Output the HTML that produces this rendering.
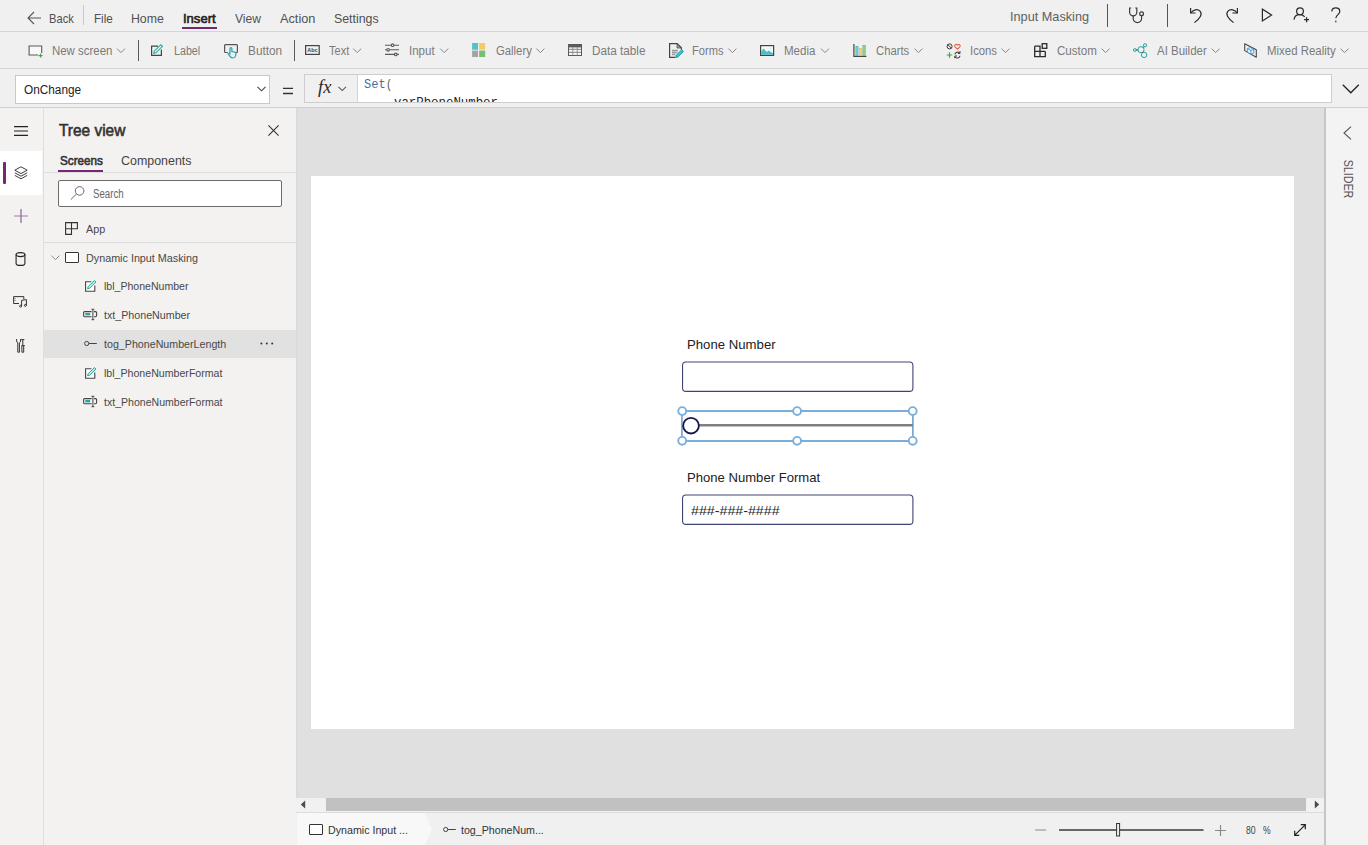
<!DOCTYPE html>
<html lang="en">
<head>
<meta charset="utf-8">
<title>Input Masking - Power Apps</title>
<style>
*{box-sizing:border-box;margin:0;padding:0}
html,body{width:1368px;height:845px;overflow:hidden;background:#f0f0f0;font-family:"Liberation Sans",sans-serif;color:#333}
.a{position:absolute}
.t{position:absolute;white-space:nowrap}
svg{position:absolute;overflow:visible}
#menubar{left:0;top:0;width:1368px;height:32px;background:#f0f0f0;border-bottom:1px solid #d4d4d4}
#ribbon{left:0;top:32px;width:1368px;height:37px;background:#f0f0f0;border-bottom:1px solid #d4d4d4}
#fxbar{left:0;top:69px;width:1368px;height:39px;background:#f0f0f0;border-bottom:1px solid #cfcfcf}
#rail{left:0;top:108px;width:44px;height:737px;background:#f3f2f1;border-right:1px solid #e0dfde}
#tree{left:44px;top:108px;width:252px;height:737px;background:#f3f2f1}
#canvasarea{left:296px;top:108px;width:1030px;height:737px;background:linear-gradient(90deg,#d9d9d9 0,#e0e0e0 3px,#e0e0e0 100%);border-right:2px solid #c6c6c6}
#screen{left:311px;top:176px;width:983px;height:553px;background:#fff}
#hscroll{left:296px;top:798px;width:1028px;height:14px;background:#f1f1f1}
#bottombar{left:296px;top:812px;width:1028px;height:33px;background:#f0f0f0;border-top:1px solid #dcdcdc}
#rightpanel{left:1326px;top:108px;width:42px;height:737px;background:#f3f3f3}
.vsep{position:absolute;width:1px;background:#555}
.inp{position:absolute;background:#fff;border:1px solid #3a3a6a;border-radius:4px}
.hd{position:absolute;width:9.800px;height:9.800px;border:1.800px solid #7aafdc;border-radius:50%;background:#fff}
</style>
</head>
<body>
<div id="menubar" class="a"></div>
<div id="ribbon" class="a"></div>
<div id="fxbar" class="a"></div>
<div id="rail" class="a"></div>
<div id="tree" class="a"></div>
<div id="canvasarea" class="a"></div>
<div id="screen" class="a"></div>
<div id="hscroll" class="a"></div>
<div id="bottombar" class="a"></div>
<div id="rightpanel" class="a"></div>

<!-- ===== menu bar ===== -->
<svg style="left:27px;top:11px" width="15" height="14" viewBox="0 0 15 14" fill="none" stroke="#555" stroke-width="1.1"><path d="M14 7H1M7 1L1 7l6 6"/></svg>
<div class="vsep" style="left:83px;top:5px;height:20px;background:#c8c8c8"></div>
<div class="a" style="left:182px;top:27px;width:35px;height:2px;background:#742774"></div>
<div class="vsep" style="left:1107px;top:4px;height:23px"></div>
<div class="vsep" style="left:1167px;top:4px;height:23px"></div>
<!-- stethoscope -->
<svg style="left:1128px;top:7px" width="18" height="17" viewBox="0 0 18 17" fill="none" stroke="#3a3a3a" stroke-width="1.2"><path d="M3.2 1H1.6v4.2a3.6 3.6 0 0 0 7.2 0V1H7.2"/><path d="M5.2 8.8v2.6a4.2 4.2 0 0 0 8.4 0V8.6"/><circle cx="13.6" cy="6.7" r="1.9"/></svg>
<!-- undo -->
<svg style="left:1189px;top:7px" width="15" height="16" viewBox="0 0 15 16" fill="none" stroke="#2b2b2b" stroke-width="1.2"><path d="M1.6 1v5h5"/><path d="M1.8 6C4 2.6 8.6 1.6 11 4.2c2.6 2.8.6 6.6-5.6 11.4"/></svg>
<!-- redo -->
<svg style="left:1224px;top:7px" width="15" height="16" viewBox="0 0 15 16" fill="none" stroke="#2b2b2b" stroke-width="1.2"><path d="M13.4 1v5h-5"/><path d="M13.2 6C11 2.6 6.4 1.6 4 4.2c-2.6 2.8-.6 6.6 5.6 11.4"/></svg>
<!-- play -->
<svg style="left:1261px;top:8px" width="12" height="14" viewBox="0 0 12 14" fill="none" stroke="#2b2b2b" stroke-width="1.2" stroke-linejoin="miter"><path d="M1.4 1.2v11.8L10.6 7z"/></svg>
<!-- user plus -->
<svg style="left:1293px;top:7px" width="17" height="16" viewBox="0 0 17 16" fill="none" stroke="#2b2b2b" stroke-width="1.2"><circle cx="7" cy="4.2" r="3.4"/><path d="M1 12.6c.4-3 2.8-4.9 6-4.9 2 0 3.6.8 4.7 2.1"/><path d="M13.6 10.2v5M11.1 12.7h5" stroke-width="1.3"/></svg>
<!-- help -->
<svg style="left:1331px;top:7px" width="10" height="16" viewBox="0 0 10 16" fill="none" stroke="#2b2b2b" stroke-width="1.2"><path d="M.8 4.6C.8 2.4 2.6.9 4.8.9s4 1.500 4 3.6c0 3-4 3.300-4 6.800"/><path d="M4.8 13.8v1.500" stroke-width="1.3"/></svg>

<!-- ===== ribbon ===== -->
<div class="vsep" style="left:138px;top:40px;height:21px;background:#5a5a5a"></div>
<div class="vsep" style="left:294px;top:40px;height:21px;background:#5a5a5a"></div>
<!-- new screen -->
<svg style="left:27.500px;top:45px" width="16" height="14" viewBox="0 0 16 14" fill="none"><path d="M10.200 10H1.100V1h12.600v7" stroke="#5a5a5a" stroke-width="1.100" fill="#f9f9f9"/><path d="M12.600 8.600v4M10.600 10.600h4" stroke="#3aa655" stroke-width="1.100"/></svg>
<!-- label -->
<svg style="left:151px;top:44px" width="13" height="12" viewBox="0 0 13 12" fill="none"><path d="M7 2.200H.6v9.200h9.800V5.600" stroke="#444" stroke-width="1.200"/><path d="M2.700 9.300l.5-2.100L9.800.7l1.600 1.600-6.500 6.500z" stroke="#1fa89c" stroke-width="1.100" fill="#e9f7f6"/></svg>
<!-- button -->
<svg style="left:224px;top:44px" width="15" height="15" viewBox="0 0 15 15" fill="none"><path d="M3.800 8.500H1.400a.8.800 0 0 1-.8-.8V1.400a.8.800 0 0 1 .8-.8h11.200a.8.800 0 0 1 .8.800v6.300a.8.800 0 0 1-.8.800h-.8" stroke="#555" stroke-width="1.200"/><path d="M6 9.600V4.500a.95.95 0 0 1 1.900 0v3l2.900.7c.8.200 1.200.8 1.100 1.600l-.4 2.200a2.500 2.500 0 0 1-2.500 2c-1.300 0-2.100-.5-2.700-1.400L4.200 9.900c.6-.8 1.300-.7 1.800-.3z" stroke="#23a3ad" stroke-width="1.200" fill="#f0f0f0"/></svg>
<!-- text -->
<svg style="left:305px;top:45px" width="16" height="11" viewBox="0 0 16 11" fill="none"><rect x=".6" y=".6" width="13.600" height="8.800" stroke="#444" stroke-width="1.200"/><text x="2.300" y="7.400" font-family="Liberation Sans,sans-serif" font-size="6.200" font-weight="700" fill="#444" stroke="none" textLength="10.200" lengthAdjust="spacingAndGlyphs">Abc</text></svg>
<!-- input -->
<svg style="left:385px;top:43px" width="15" height="14" viewBox="0 0 15 14" fill="none" stroke="#5a5a5a" stroke-width="1.100"><path d="M0 2.200h6.300M8.900 2.200H14M0 6.800h1.800M4.400 6.800H14M0 11.400h9.400M12 11.400h2"/><circle cx="7.600" cy="2.200" r="1.300"/><circle cx="3.100" cy="6.800" r="1.300"/><circle cx="10.700" cy="11.400" r="1.300"/></svg>
<!-- gallery -->
<svg style="left:472px;top:43px" width="14" height="15" viewBox="0 0 14 15"><rect x=".1" y="0" width="5.900" height="6.700" fill="#4fc3c8"/><rect x="7.100" y="0" width="6.100" height="6.700" fill="#f8ca66"/><rect x=".1" y="7.600" width="5.900" height="6.400" fill="#a3a3a3"/><rect x="7.100" y="7.600" width="6.100" height="6.400" fill="#72c177"/></svg>
<!-- data table -->
<svg style="left:568px;top:44px" width="15" height="12" viewBox="0 0 15 12" fill="none" stroke="#5a5a5a" stroke-width="1"><rect x=".5" y=".5" width="13" height="11" fill="#f6f6f6"/><path d="M.5 2.200h13" stroke-width="2.400"/><path d="M1 5.300h12M1 8.300h12" stroke="#9a9a9a" stroke-width="1.300"/><path d="M4.800 3v8.400M9.300 3v8.400" stroke="#8a8a8a" stroke-width=".9"/></svg>
<!-- forms -->
<svg style="left:668.500px;top:43px" width="16" height="16" viewBox="0 0 16 16" fill="none"><path d="M6.400 14.400H.6V.6h7.600l4.200 4.200v2" stroke="#444" stroke-width="1.200"/><path d="M8 .8v4.200h4.200z" fill="#9a9a9a" stroke="#555" stroke-width=".8"/><path d="M3 7.500h6M3 9.500h5.200M3 11.500h3.200" stroke="#9a9a9a" stroke-width="1.300"/><path d="M6.800 14.500l.4-2.200 5.500-5.600 1.700 1.700-5.500 5.600z" stroke="#1c9aa5" stroke-width="1" fill="#45c3cb"/></svg>
<!-- media -->
<svg style="left:760px;top:45px" width="15" height="12" viewBox="0 0 15 12" fill="none"><rect x=".6" y=".6" width="13" height="9.800" stroke="#444" stroke-width="1.200" fill="#f7f7f7"/><path d="M1.200 9.800V6.200l2.400-2.600 3.200 3.400 1.800-1.500 4.400 2.800v1.500z" fill="#4bbfc3"/><circle cx="10.400" cy="3.200" r=".8" fill="#bfe6e8"/></svg>
<!-- charts -->
<svg style="left:852.500px;top:44px" width="14" height="14" viewBox="0 0 14 14" fill="none"><path d="M.9 0v12.400H13.400" stroke="#444" stroke-width="1.200"/><rect x="2.900" y="2.400" width="2.100" height="9" fill="#7fd3d6" stroke="#3db2b8" stroke-width=".7"/><rect x="6.400" y="4.400" width="2.100" height="7" fill="#f9d588" stroke="#e9b64d" stroke-width=".7"/><rect x="9.900" y="1.500" width="2.300" height="9.900" fill="#97d39b" stroke="#67b56d" stroke-width=".7"/></svg>
<!-- icons -->
<svg style="left:945.500px;top:43px" width="16" height="16" viewBox="0 0 16 16" fill="none"><circle cx="3.600" cy="3.400" r="2.500" stroke="#3a3a3a" stroke-width="1"/><path d="M1.800 1.600l3.600 3.600" stroke="#3a3a3a" stroke-width="1"/><path d="M11.400 6.200L9 3.800a1.450 1.450 0 0 1 2.050-2.050l.35.350.35-.350A1.450 1.450 0 0 1 13.800 3.800z" stroke="#e9603f" stroke-width="1.100"/><path d="M3.500 9.200v5.600M.7 12h5.600" stroke="#3aa655" stroke-width="1.200"/><path d="M8.800 11.400a2.700 2.700 0 0 1 4.800-1.300M14 12.700a2.700 2.700 0 0 1-4.800 1.300" stroke="#3a3a3a" stroke-width="1.100"/><path d="M14 8.200v2.200h-2.200M8.800 15.200V13H11" stroke="#3a3a3a" stroke-width="1"/></svg>
<!-- custom -->
<svg style="left:1034px;top:43px" width="14" height="15" viewBox="0 0 14 15" fill="none" stroke="#2a2a2a" stroke-width="1.300"><path d="M.7 3.200h5.300v10.400M.7 8.400h10.600M.7 3.200v10.400h10.600V8.400"/><rect x="8.200" y=".7" width="4.600" height="4.600"/></svg>
<!-- ai builder -->
<svg style="left:1133px;top:43px" width="15" height="15" viewBox="0 0 15 15" fill="none" stroke="#1fa5a5" stroke-width="1"><circle cx="1.900" cy="7" r="1.400"/><circle cx="8" cy="6.700" r="3.100"/><circle cx="12" cy="2.300" r="1.600"/><circle cx="11.100" cy="11.900" r="2.700"/><path d="M3.200 7h1.800M10.100 4.500l.8-1M9.500 9.400l.3.400" stroke="#444"/></svg>
<!-- mixed reality -->
<svg style="left:1243.500px;top:43px" width="14" height="15" viewBox="0 0 14 15" fill="none"><path d="M.7.800l11.600 6v7.400L.7 7.600z" stroke="#444" stroke-width="1.050" stroke-linejoin="round"/><path d="M3.400 5.600l3-1 3.400 1.800v3.800l-3 .8-3.400-1.800zM3.400 5.600l3.400 1.800 3-.8M6.800 7.400v3.600" stroke="#3f97dd" stroke-width=".9" stroke-linejoin="round" fill="#eef5fb"/></svg>
<!-- ribbon chevrons -->
<svg style="left:0;top:0" width="1368" height="70" viewBox="0 0 1368 70" fill="none" stroke="#858585" stroke-width="1"><path d="M117 48.600l4 4 4-4M353.200 48.600l4 4 4-4M440.200 48.600l4 4 4-4M536.400 48.600l4 4 4-4M728.400 48.600l4 4 4-4M821 48.600l4 4 4-4M914.500 48.600l4 4 4-4M1001.500 48.600l4 4 4-4M1101.600 48.600l4 4 4-4M1211.600 48.600l4 4 4-4M1340.500 48.600l4 4 4-4"/></svg>

<!-- ===== formula bar ===== -->
<div class="a" style="left:15px;top:75px;width:255px;height:29px;background:#fff;border:1px solid #c8c8c8"></div>
<svg style="left:257px;top:86px" width="9" height="6" viewBox="0 0 9 6" fill="none" stroke="#444" stroke-width="1.100"><path d="M.5.800l4 4 4-4"/></svg>
<svg style="left:283px;top:87px" width="10" height="8" viewBox="0 0 10 8" stroke="#333" stroke-width="1.300"><path d="M0 1.400h10M0 6.500h10"/></svg>
<div class="a" style="left:304px;top:74px;width:1028px;height:29px;background:#fff;border:1px solid #cecece"></div>
<div class="a" style="left:305px;top:75px;width:53px;height:27px;background:#f0f0f0;border-right:1px solid #d4d4d4"></div>
<svg style="left:338px;top:86px" width="9" height="6" viewBox="0 0 9 6" fill="none" stroke="#555" stroke-width="1.050"><path d="M.5.800l3.700 3.700L7.900.8"/></svg>
<svg style="left:1342px;top:84px" width="18" height="10" viewBox="0 0 18 10" fill="none" stroke="#222" stroke-width="1.300"><path d="M.8.800l8 8 8-8"/></svg>
<div class="a" id="fxclip" style="left:358px;top:75px;width:973px;height:27px;overflow:hidden"></div>

<!-- ===== left rail ===== -->
<svg style="left:14px;top:126px" width="14" height="10" viewBox="0 0 14 10" stroke="#222" stroke-width="1.100"><path d="M0 .6h14M0 5h14M0 9.400h14"/></svg>
<div class="a" style="left:0;top:151px;width:42px;height:44px;background:#fff"></div>
<div class="a" style="left:3px;top:162px;width:3px;height:22px;background:#742774;border-radius:1px"></div>
<svg style="left:14px;top:166px" width="14" height="14" viewBox="0 0 14 14" fill="none" stroke="#333" stroke-width=".95" stroke-linejoin="round"><path d="M7 .8l6.200 3.400L7 7.600.8 4.200z"/><path d="M.8 6.800L7 10.200l6.200-3.400"/><path d="M.8 9.400L7 12.800l6.200-3.400"/></svg>
<svg style="left:13.500px;top:209px" width="14" height="14" viewBox="0 0 14 14" stroke="#75407a" stroke-width="1"><path d="M7 0v14"/><path d="M0 7h14" stroke="#9a7a9c"/></svg>
<svg style="left:15px;top:252px" width="11" height="14" viewBox="0 0 11 14" fill="none" stroke="#222" stroke-width="1.100"><ellipse cx="5.500" cy="2.600" rx="4.400" ry="2"/><path d="M1.100 2.600v8.800c0 1.100 2 2 4.400 2s4.400-.9 4.400-2V2.600"/></svg>
<svg style="left:13px;top:296px" width="16" height="12" viewBox="0 0 16 12" fill="none" stroke="#333" stroke-width="1"><path d="M6 7.500H.6V.6h10.200v2.600"/><path d="M2 2.200v.8M2 4.200v.8"/><path d="M8.600 10V4.400l4.800-.8v5.600"/><circle cx="7.600" cy="10.200" r="1"/><circle cx="12.400" cy="9.400" r="1"/></svg>
<svg style="left:16px;top:339px" width="9" height="14" viewBox="0 0 9 14" fill="none" stroke="#333" stroke-width="1"><path d="M.6 0v2c0 1 .5 1.500 1.200 1.800v9.400h1.600V3.800C4.100 3.500 4.600 3 4.600 2V0"/><path d="M5.200.6h3.200M6.800.6v5.600M5.400 6.600h3.400M5.900 7v6.200h1.800V7"/></svg>

<!-- ===== tree view ===== -->
<svg style="left:268px;top:125px" width="11" height="11" viewBox="0 0 11 11" stroke="#333" stroke-width="1.100"><path d="M.4.400l10.200 10.200M10.600.4L.4 10.600"/></svg>
<div class="a" style="left:44px;top:172px;width:252px;height:1px;background:#dcdcdc"></div>
<div class="a" style="left:58px;top:170px;width:45px;height:2px;background:#742774"></div>
<div class="a" style="left:58px;top:180px;width:224px;height:27px;background:#fff;border:1px solid #6b6b6b;border-radius:2px"></div>
<svg style="left:70px;top:186px" width="14" height="14" viewBox="0 0 14 14" fill="none" stroke="#7d5a7d" stroke-width="1"><circle cx="9.600" cy="4.900" r="4.300"/><path d="M6.500 8L.8 13.600"/></svg>
<svg style="left:65px;top:222px" width="14" height="13" viewBox="0 0 14 13" fill="none" stroke="#333" stroke-width="1.100"><path d="M.6.600h11.800v6.200H.6zM6.500.6v11.800H.6V6.800"/></svg>
<div class="a" style="left:44px;top:242px;width:252px;height:1px;background:#dcdcdc"></div>
<svg style="left:51px;top:255px" width="9" height="6" viewBox="0 0 9 6" fill="none" stroke="#8a8a8a" stroke-width="1"><path d="M.4.600l4 4 4-4"/></svg>
<div class="a" style="left:65px;top:252px;width:14px;height:11px;border:1.200px solid #333;border-radius:1px;background:#fff"></div>
<div class="a" style="left:44px;top:330px;width:252px;height:28px;background:#e1e1e1"></div>
<!-- label icons -->
<svg style="left:84.500px;top:280px" width="12" height="12" viewBox="0 0 12 12" fill="none"><path d="M6.300 1.800H.6v9.500h9.200V5.400" stroke="#444" stroke-width="1.100" fill="#fff"/><path d="M2.600 8.800l.5-2L9.400.5 10.900 2 4.600 8.300z" stroke="#1fa89c" stroke-width="1" fill="#c5efe9"/></svg>
<svg style="left:84.500px;top:367px" width="12" height="12" viewBox="0 0 12 12" fill="none"><path d="M6.300 1.800H.6v9.500h9.200V5.400" stroke="#444" stroke-width="1.100" fill="#fff"/><path d="M2.600 8.800l.5-2L9.400.5 10.900 2 4.600 8.300z" stroke="#1fa89c" stroke-width="1" fill="#c5efe9"/></svg>
<!-- text input icons -->
<svg style="left:83px;top:309px" width="15" height="11" viewBox="0 0 15 11" fill="none"><path d="M8.600 2.600H1.700A1.100 1.100 0 0 0 .6 3.700v2.900a1.100 1.100 0 0 0 1.100 1.100h6.900M11 2.600h1.500a1.100 1.100 0 0 1 1.100 1.100v2.900a1.100 1.100 0 0 1-1.100 1.100H11" stroke="#444" stroke-width="1.100" fill="none"/><rect x="2.300" y="4" width="4.800" height="2.300" fill="#1fa89c"/><path d="M9.900.3v10.400M8.500.3h2.800M8.500 10.700h2.800" stroke="#444" stroke-width="1"/></svg>
<svg style="left:83px;top:396px" width="15" height="11" viewBox="0 0 15 11" fill="none"><path d="M8.600 2.600H1.700A1.100 1.100 0 0 0 .6 3.700v2.900a1.100 1.100 0 0 0 1.100 1.100h6.900M11 2.600h1.500a1.100 1.100 0 0 1 1.100 1.100v2.900a1.100 1.100 0 0 1-1.100 1.100H11" stroke="#444" stroke-width="1.100" fill="none"/><rect x="2.300" y="4" width="4.800" height="2.300" fill="#1fa89c"/><path d="M9.900.3v10.400M8.500.3h2.800M8.500 10.700h2.800" stroke="#444" stroke-width="1"/></svg>
<!-- slider icon -->
<svg style="left:84px;top:340px" width="13" height="7" viewBox="0 0 13 7" fill="none" stroke="#444" stroke-width="1"><circle cx="2.700" cy="3.500" r="2.100"/><path d="M4.800 3.500h8"/></svg>
<svg style="left:260px;top:342px" width="14" height="3" viewBox="0 0 14 3" fill="#333"><circle cx="1.400" cy="1.500" r="1"/><circle cx="6.800" cy="1.500" r="1"/><circle cx="12.200" cy="1.500" r="1"/></svg>

<!-- ===== canvas controls ===== -->
<svg style="left:0;top:0" width="1368" height="845" viewBox="0 0 1368 845" fill="none">
<rect x="682.550" y="362" width="230.350" height="29.400" rx="3.400" fill="#fff" stroke="#3f4573" stroke-width="1.100"/>
<rect x="682.550" y="495" width="230.350" height="29.400" rx="3.400" fill="#fff" stroke="#3f4573" stroke-width="1.100"/>
<path d="M699 425.200H913" stroke="#7f7f7f" stroke-width="2.500"/>
<path d="M682 411H913M682 440.900H913" stroke="#7aafdc" stroke-width="2"/>
<path d="M681.950 411V441M912.900 411V441" stroke="#5e93c8" stroke-width="1.400"/>
<circle cx="691" cy="425.650" r="7.850" fill="#fff" stroke="#17174d" stroke-width="1.850"/>
<g fill="#fff" stroke="#7aafdc" stroke-width="1.900">
<circle cx="682.200" cy="411.100" r="3.950"/><circle cx="797.100" cy="411.100" r="3.950"/><circle cx="912.700" cy="411.100" r="3.950"/>
<circle cx="682.200" cy="440.850" r="3.950"/><circle cx="797.100" cy="440.850" r="3.950"/><circle cx="912.700" cy="440.850" r="3.950"/>
</g>
</svg>

<!-- ===== scroll + bottom bar ===== -->
<div class="a" style="left:326px;top:798px;width:980px;height:13px;background:#c1c1c1"></div>
<svg style="left:300px;top:800px" width="6" height="9" viewBox="0 0 6 9" fill="#4a4a4a"><path d="M5.200.4v8.200L.8 4.500z"/></svg>
<svg style="left:1314px;top:800px" width="6" height="9" viewBox="0 0 6 9" fill="#4a4a4a"><path d="M.8.400v8.200l4.400-4.100z"/></svg>
<svg style="left:297px;top:812px" width="140" height="33" viewBox="0 0 140 33"><path d="M0 1h128l7 16L128 33H0z" fill="#f8f8f8"/></svg>
<div class="a" style="left:309px;top:824px;width:14px;height:11px;border:1px solid #333;border-radius:1px;background:#fff"></div>
<svg style="left:443px;top:826px" width="13" height="7" viewBox="0 0 13 7" fill="none" stroke="#444" stroke-width="1"><circle cx="2.700" cy="3.500" r="2.100"/><path d="M4.800 3.500h8"/></svg>
<div class="a" style="left:1035px;top:829px;width:11px;height:1.500px;background:#bdbdbd"></div>
<svg style="left:1059px;top:822px" width="145" height="15" viewBox="0 0 145 15"><path d="M0 8h144.500" stroke="#3a3a3a" stroke-width="1.600"/><rect x="57.600" y="1.500" width="3" height="12.500" fill="#f0f0f0" stroke="#333" stroke-width="1"/></svg>
<svg style="left:1215px;top:825px" width="11" height="11" viewBox="0 0 11 11" stroke="#8a8a8a" stroke-width="1.200"><path d="M5.500 0v11M0 5.500h11"/></svg>
<svg style="left:1294px;top:824px" width="12" height="12" viewBox="0 0 12 12" fill="none" stroke="#222" stroke-width="1.200"><path d="M.8 11.200L11.200.8M6.800.7h4.500v4.500M5.200 11.300H.7V6.800"/></svg>

<!-- ===== right panel ===== -->
<svg style="left:1343px;top:126px" width="9" height="14" viewBox="0 0 9 14" fill="none" stroke="#555" stroke-width="1.100"><path d="M8 .6L1 7l7 6.400"/></svg>
<span class="t" style="left:1347.500px;top:178.600px;font-size:12px;color:#555;line-height:12px;transform:translate(-50%,-50%) rotate(90deg) scaleX(.89)">SLIDER</span>
<span class="t" style="left:318px;top:72.500px;font-family:'Liberation Serif',serif;font-style:italic;font-size:18.500px;line-height:28px;color:#2a2a2a;letter-spacing:.2px">fx</span>

<!-- text -->
<span class="t" style="left:49.30px;top:9.00px;font-size:13px;color:#505050;line-height:20px;transform-origin:0 0;transform:scaleX(0.8569);">Back</span>
<span class="t" style="left:93.50px;top:9.00px;font-size:13px;color:#505050;line-height:20px;transform-origin:0 0;transform:scaleX(0.8964);">File</span>
<span class="t" style="left:130.90px;top:9.00px;font-size:13px;color:#505050;line-height:20px;transform-origin:0 0;transform:scaleX(0.9443);">Home</span>
<span class="t" style="left:182.50px;top:9.00px;font-size:13px;color:#222;line-height:20px;-webkit-text-stroke:.6px #222;transform-origin:0 0;transform:scaleX(1.0022);">Insert</span>
<span class="t" style="left:234.90px;top:9.00px;font-size:13px;color:#505050;line-height:20px;transform-origin:0 0;transform:scaleX(0.9252);">View</span>
<span class="t" style="left:280.10px;top:9.00px;font-size:13px;color:#505050;line-height:20px;transform-origin:0 0;transform:scaleX(0.9785);">Action</span>
<span class="t" style="left:333.50px;top:9.00px;font-size:13px;color:#505050;line-height:20px;transform-origin:0 0;transform:scaleX(0.9500);">Settings</span>
<span class="t" style="left:1010.10px;top:7.00px;font-size:13px;color:#606060;line-height:20px;transform-origin:0 0;transform:scaleX(0.9762);">Input Masking</span>
<span class="t" style="left:51.50px;top:41.00px;font-size:12px;color:#7a7a7a;line-height:20px;transform-origin:0 0;transform:scaleX(0.9532);">New screen</span>
<span class="t" style="left:173.50px;top:41.00px;font-size:12px;color:#7a7a7a;line-height:20px;transform-origin:0 0;transform:scaleX(0.8927);">Label</span>
<span class="t" style="left:247.50px;top:41.00px;font-size:12px;color:#7a7a7a;line-height:20px;transform-origin:0 0;transform:scaleX(0.9848);">Button</span>
<span class="t" style="left:328.50px;top:41.00px;font-size:12px;color:#7a7a7a;line-height:20px;transform-origin:0 0;transform:scaleX(0.9207);">Text</span>
<span class="t" style="left:408.50px;top:41.00px;font-size:12px;color:#7a7a7a;line-height:20px;transform-origin:0 0;transform:scaleX(0.9594);">Input</span>
<span class="t" style="left:495.50px;top:41.00px;font-size:12px;color:#7a7a7a;line-height:20px;transform-origin:0 0;transform:scaleX(0.9419);">Gallery</span>
<span class="t" style="left:591.50px;top:41.00px;font-size:12px;color:#7a7a7a;line-height:20px;transform-origin:0 0;transform:scaleX(0.9782);">Data table</span>
<span class="t" style="left:691.50px;top:41.00px;font-size:12px;color:#7a7a7a;line-height:20px;transform-origin:0 0;transform:scaleX(0.9261);">Forms</span>
<span class="t" style="left:783.50px;top:41.00px;font-size:12px;color:#7a7a7a;line-height:20px;transform-origin:0 0;transform:scaleX(0.9609);">Media</span>
<span class="t" style="left:875.50px;top:41.00px;font-size:12px;color:#7a7a7a;line-height:20px;transform-origin:0 0;transform:scaleX(0.9381);">Charts</span>
<span class="t" style="left:969.50px;top:41.00px;font-size:12px;color:#7a7a7a;line-height:20px;transform-origin:0 0;transform:scaleX(0.9394);">Icons</span>
<span class="t" style="left:1056.50px;top:41.00px;font-size:12px;color:#7a7a7a;line-height:20px;transform-origin:0 0;transform:scaleX(0.9654);">Custom</span>
<span class="t" style="left:1156.50px;top:41.00px;font-size:12px;color:#7a7a7a;line-height:20px;transform-origin:0 0;transform:scaleX(0.9560);">AI Builder</span>
<span class="t" style="left:1266.50px;top:41.00px;font-size:12px;color:#7a7a7a;line-height:20px;transform-origin:0 0;transform:scaleX(0.9529);">Mixed Reality</span>
<span class="t" style="left:23.50px;top:80.00px;font-size:12.5px;color:#222;line-height:20px;transform-origin:0 0;transform:scaleX(0.9443);">OnChange</span>
<span class="t" style="left:363.90px;top:75.00px;font-size:12.2px;color:#3d6fa8;line-height:20px;font-family:'Liberation Mono',monospace;transform-origin:0 0;transform:scaleX(0.9848);">Set</span>
<span class="t" style="left:386.10px;top:75.00px;font-size:12.2px;color:#555;line-height:20px;font-family:'Liberation Mono',monospace;transform-origin:0 0;transform:scaleX(0.8399);">(</span>
<span class="t" style="left:393.50px;top:93.00px;font-size:12.2px;color:#222;line-height:20px;font-family:'Liberation Mono',monospace;transform-origin:0 0;transform:scaleX(1.0150);">varPhoneNumber</span>
<span class="t" style="left:59.10px;top:121.00px;font-size:16px;color:#333;line-height:20px;-webkit-text-stroke:.6px #333;transform-origin:0 0;transform:scaleX(0.9642);">Tree view</span>
<span class="t" style="left:59.90px;top:151.00px;font-size:13px;color:#333;line-height:20px;-webkit-text-stroke:.6px #333;transform-origin:0 0;transform:scaleX(0.9000);">Screens</span>
<span class="t" style="left:120.70px;top:151.00px;font-size:13px;color:#444;line-height:20px;transform-origin:0 0;transform:scaleX(0.9563);">Components</span>
<span class="t" style="left:92.50px;top:184.00px;font-size:12px;color:#666;line-height:20px;transform-origin:0 0;transform:scaleX(0.8067);">Search</span>
<span class="t" style="left:86.10px;top:219.00px;font-size:11px;color:#484848;line-height:20px;transform-origin:0 0;transform:scaleX(0.9780);">App</span>
<span class="t" style="left:85.50px;top:248.00px;font-size:11px;color:#484848;line-height:20px;transform-origin:0 0;transform:scaleX(0.9792);">Dynamic Input Masking</span>
<span class="t" style="left:104.30px;top:276.00px;font-size:11px;color:#484848;line-height:20px;transform-origin:0 0;transform:scaleX(0.9593);">lbl_PhoneNumber</span>
<span class="t" style="left:104.30px;top:305.00px;font-size:11px;color:#484848;line-height:20px;transform-origin:0 0;transform:scaleX(0.9707);">txt_PhoneNumber</span>
<span class="t" style="left:104.30px;top:334.00px;font-size:11px;color:#484848;line-height:20px;transform-origin:0 0;transform:scaleX(0.9702);">tog_PhoneNumberLength</span>
<span class="t" style="left:104.30px;top:363.00px;font-size:11px;color:#484848;line-height:20px;transform-origin:0 0;transform:scaleX(0.9640);">lbl_PhoneNumberFormat</span>
<span class="t" style="left:104.30px;top:392.00px;font-size:11px;color:#484848;line-height:20px;transform-origin:0 0;transform:scaleX(0.9599);">txt_PhoneNumberFormat</span>
<span class="t" style="left:686.50px;top:335.00px;font-size:12.8px;color:#222;line-height:20px;transform-origin:0 0;transform:scaleX(1.0292);">Phone Number</span>
<span class="t" style="left:686.50px;top:468.00px;font-size:12.8px;color:#222;line-height:20px;transform-origin:0 0;transform:scaleX(1.0229);">Phone Number Format</span>
<span class="t" style="left:690.50px;top:501.00px;font-size:12.8px;color:#222;line-height:20px;transform-origin:0 0;transform:scaleX(1.1117);">###-###-####</span>
<span class="t" style="left:327.50px;top:820.00px;font-size:11.5px;color:#333;line-height:20px;transform-origin:0 0;transform:scaleX(0.9273);">Dynamic Input ...</span>
<span class="t" style="left:460.50px;top:820.00px;font-size:11.5px;color:#333;line-height:20px;transform-origin:0 0;transform:scaleX(0.9253);">tog_PhoneNum...</span>
<span class="t" style="left:1245.50px;top:820.00px;font-size:10.5px;color:#444;line-height:20px;transform-origin:0 0;transform:scaleX(0.8260);">80</span>
<span class="t" style="left:1262.50px;top:820.00px;font-size:10.5px;color:#444;line-height:20px;transform-origin:0 0;transform:scaleX(0.8095);">%</span>
<!-- overlay that clips the 2nd formula line -->
<div class="a" style="left:358px;top:102px;width:974px;height:6px;background:#f0f0f0;border-top:1px solid #cecece;border-bottom:1px solid #cfcfcf"></div>
</body>
</html>
